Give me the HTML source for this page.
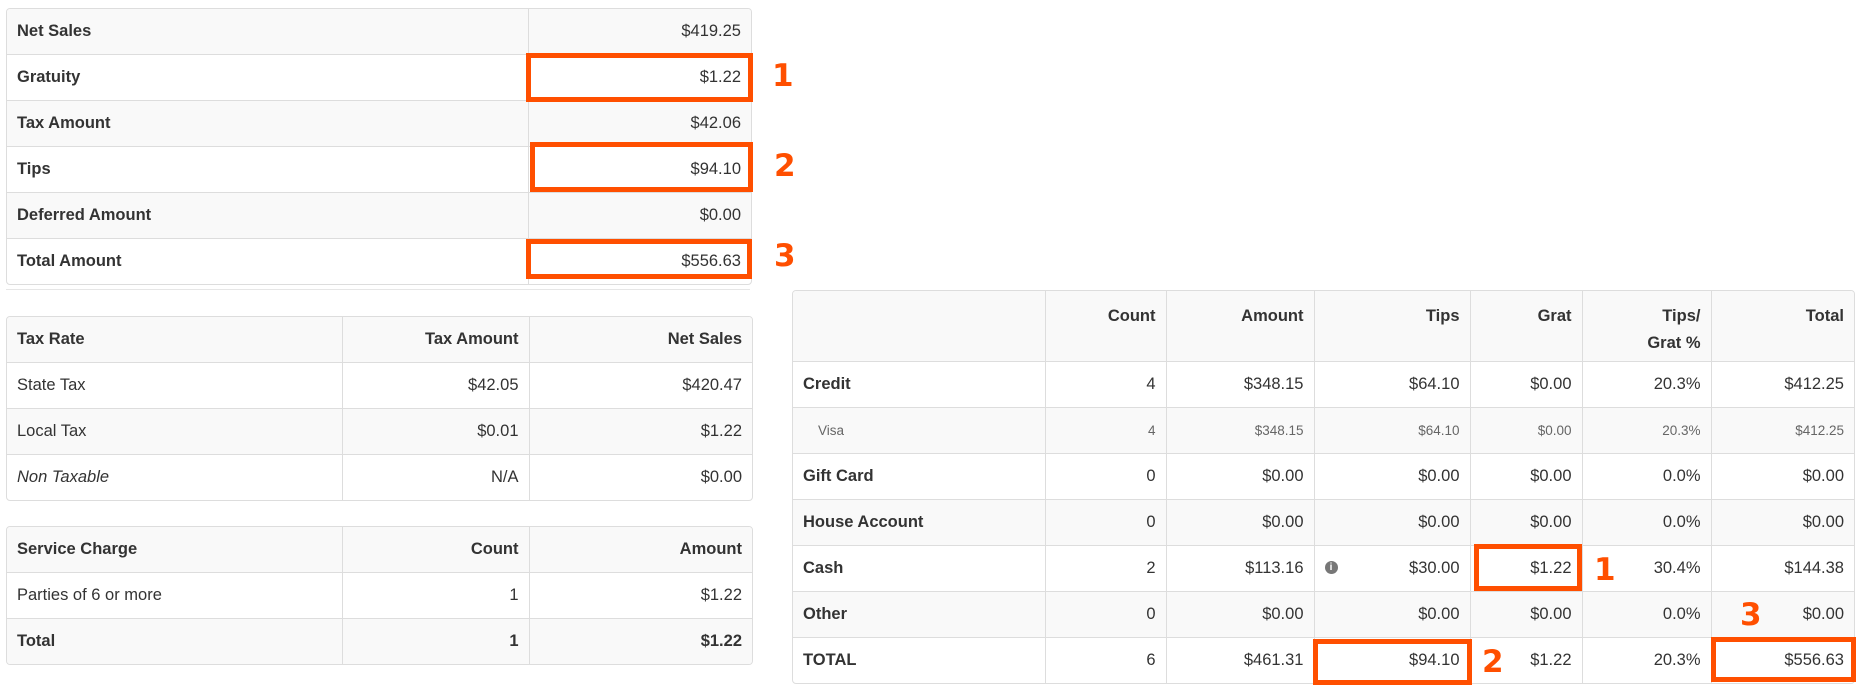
<!DOCTYPE html>
<html><head><meta charset="utf-8"><style>
body{margin:0;width:1857px;height:700px;background:#fff;font-family:"Liberation Sans",Arial,sans-serif;font-size:16.5px;color:#333;position:relative;overflow:hidden}
.t{position:absolute;border:1px solid #ddd;border-radius:4px;overflow:hidden}
table{border-collapse:collapse;table-layout:fixed;width:100%}
td{border-top:1px solid #ddd;border-left:1px solid #ddd;padding:0 10px;height:45px;text-align:right;white-space:nowrap}
tr:first-child td{border-top:none}
td:first-child{border-left:none;text-align:left}
.s{background:#f9f9f9}
b,.b td{font-weight:bold}
.hdr td{vertical-align:top;padding-top:12px;height:58px;font-weight:bold;line-height:27px}
.v td{font-size:13.5px;color:#666}
.v td:first-child{padding-left:25px}
.box{position:absolute;border:5px solid #ff4f00;box-sizing:border-box}
.n{position:absolute;color:#ff4f00;font-weight:bold;font-size:31px;font-family:"DejaVu Sans","Liberation Sans",sans-serif}
.i{display:inline-block;width:13px;height:13px;border-radius:50%;background:#777;color:#fff;font-size:10px;line-height:13px;text-align:center;font-weight:bold;float:left;margin-top:2px}
</style></head><body>

<div class="t" style="left:6px;top:8px;width:744px;">
<table><colgroup><col style="width:521px"><col></colgroup>
<tr class="s"><td><b>Net Sales</b></td><td>$419.25</td></tr>
<tr><td><b>Gratuity</b></td><td>$1.22</td></tr>
<tr class="s"><td><b>Tax Amount</b></td><td>$42.06</td></tr>
<tr><td><b>Tips</b></td><td>$94.10</td></tr>
<tr class="s"><td><b>Deferred Amount</b></td><td>$0.00</td></tr>
<tr><td><b>Total Amount</b></td><td>$556.63</td></tr>
</table></div>
<div style="position:absolute;left:6px;top:289px;width:744px;border-top:1px solid #e6e6e6"></div>

<div class="t" style="left:6px;top:316px;width:745px;">
<table><colgroup><col style="width:335px"><col style="width:187px"><col></colgroup>
<tr class="s b"><td>Tax Rate</td><td>Tax Amount</td><td>Net Sales</td></tr>
<tr><td>State Tax</td><td>$42.05</td><td>$420.47</td></tr>
<tr class="s"><td>Local Tax</td><td>$0.01</td><td>$1.22</td></tr>
<tr><td><i>Non Taxable</i></td><td>N/A</td><td>$0.00</td></tr>
</table></div>

<div class="t" style="left:6px;top:526px;width:745px;">
<table><colgroup><col style="width:335px"><col style="width:187px"><col></colgroup>
<tr class="s b"><td>Service Charge</td><td>Count</td><td>Amount</td></tr>
<tr><td>Parties of 6 or more</td><td>1</td><td>$1.22</td></tr>
<tr class="s b"><td>Total</td><td>1</td><td>$1.22</td></tr>
</table></div>

<div class="t" style="left:792px;top:290px;width:1061px;">
<table><colgroup><col style="width:252px"><col style="width:121px"><col style="width:148px"><col style="width:156px"><col style="width:112px"><col style="width:129px"><col></colgroup>
<tr class="s hdr"><td></td><td>Count</td><td>Amount</td><td>Tips</td><td>Grat</td><td>Tips/<br>Grat %</td><td>Total</td></tr>
<tr><td><b>Credit</b></td><td>4</td><td>$348.15</td><td>$64.10</td><td>$0.00</td><td>20.3%</td><td>$412.25</td></tr>
<tr class="s v"><td>Visa</td><td>4</td><td>$348.15</td><td>$64.10</td><td>$0.00</td><td>20.3%</td><td>$412.25</td></tr>
<tr><td><b>Gift Card</b></td><td>0</td><td>$0.00</td><td>$0.00</td><td>$0.00</td><td>0.0%</td><td>$0.00</td></tr>
<tr class="s"><td><b>House Account</b></td><td>0</td><td>$0.00</td><td>$0.00</td><td>$0.00</td><td>0.0%</td><td>$0.00</td></tr>
<tr><td><b>Cash</b></td><td>2</td><td>$113.16</td><td><span class="i">i</span>$30.00</td><td>$1.22</td><td>30.4%</td><td>$144.38</td></tr>
<tr class="s"><td><b>Other</b></td><td>0</td><td>$0.00</td><td>$0.00</td><td>$0.00</td><td>0.0%</td><td>$0.00</td></tr>
<tr><td><b>TOTAL</b></td><td>6</td><td>$461.31</td><td>$94.10</td><td>$1.22</td><td>20.3%</td><td>$556.63</td></tr>
</table></div>

<div class="box" style="left:526px;top:53px;width:227px;height:49px"></div>
<div class="box" style="left:530px;top:142px;width:223px;height:50px"></div>
<div class="box" style="left:526px;top:239px;width:226px;height:40px"></div>
<div class="n" style="left:772px;top:58px">1</div>
<div class="n" style="left:774px;top:148px">2</div>
<div class="n" style="left:774px;top:238px">3</div>

<div class="box" style="left:1474px;top:544px;width:108px;height:47px"></div>
<div class="box" style="left:1313px;top:639px;width:159px;height:46px"></div>
<div class="box" style="left:1711px;top:637px;width:145px;height:45px"></div>
<div class="n" style="left:1594px;top:552px">1</div>
<div class="n" style="left:1482px;top:644px">2</div>
<div class="n" style="left:1740px;top:597px">3</div>
</body></html>
